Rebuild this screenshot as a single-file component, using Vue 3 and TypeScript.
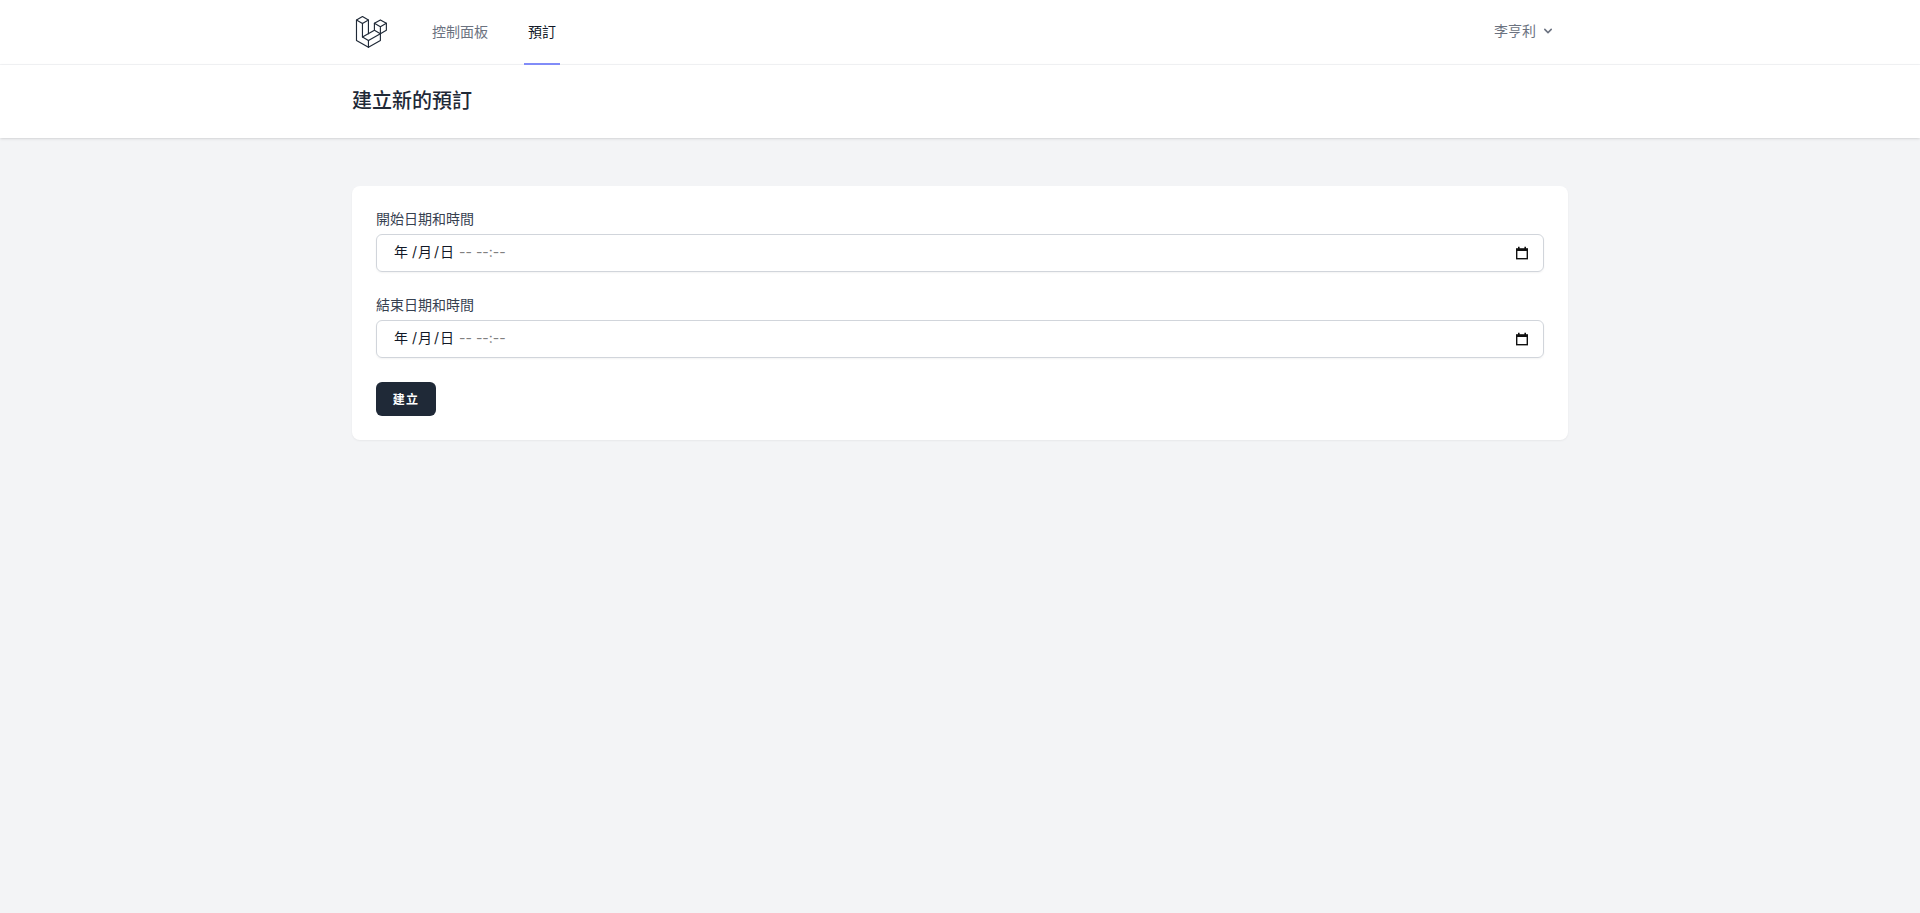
<script setup lang="ts">
const navLinks = [
  { label: '控制面板', active: false },
  { label: '預訂', active: true },
]

const dateFields = ['開始日期和時間', '結束日期和時間']
</script>

<template>
  <div class="page">
    <nav class="nav">
      <div class="container nav-inner">
        <div class="nav-left">
          <svg class="logo" viewBox="0 0 316 316" fill="none" stroke="#1f2937" stroke-width="10" stroke-linejoin="round" stroke-linecap="round">
            <path d="M39.4 52.6 91.8 22.4l52.4 30.2-52.4 30.2z" />
            <path d="M39.4 52.6v179.6l104.9 60.4 104.9-60.4v-59.8" />
            <path d="M144.2 52.6v119.8M91.8 82.8v119.7l52.5 29.7 104.9-59.8" />
            <path d="M144.3 232.2v60.4" />
            <path d="M91.8 202.5 196.7 142.2l52.5 30.2 52.5-30.2V82.2L249.2 52l-52.5 30.2v60" />
            <path d="M196.7 82.2l52.5 30.2 52.5-30.2M249.2 112.4v60" />
          </svg>
          <div class="nav-links">
            <a v-for="link in navLinks" :key="link.label" class="nav-link" :class="{ active: link.active }">{{ link.label }}</a>
          </div>
        </div>
        <button class="user-btn">
          <span>李亨利</span>
          <svg class="chevron" viewBox="0 0 20 20" fill="currentColor">
            <path fill-rule="evenodd" clip-rule="evenodd" d="M5.293 7.293a1 1 0 011.414 0L10 10.586l3.293-3.293a1 1 0 111.414 1.414l-4 4a1 1 0 01-1.414 0l-4-4a1 1 0 010-1.414z" />
          </svg>
        </button>
      </div>
    </nav>

    <header class="header">
      <div class="container">
        <h2 class="title">建立新的預訂</h2>
      </div>
    </header>

    <main class="main">
      <div class="container">
        <form class="card" @submit.prevent>
          <div v-for="field in dateFields" :key="field" class="field">
            <label class="label">{{ field }}</label>
            <div class="date-input">
              <span class="date-part">年</span>
              <span class="date-sep first">/</span>
              <span class="date-part">月</span>
              <span class="date-sep">/</span>
              <span class="date-part">日</span>
              <span class="date-time">-- --:--</span>
              <svg class="calendar" viewBox="0 0 14 14" fill="none">
                <path fill="#111" d="M1 2.2h12V13.4H1z" />
                <path fill="#fff" d="M2.4 5h9.2v7H2.4z" />
                <path fill="#111" d="M3 .8h1.6v2.4H3zM9.4.8H11v2.4H9.4z" />
              </svg>
            </div>
          </div>
          <button class="submit" type="submit"><span class="submit-text">建立</span></button>
        </form>
      </div>
    </main>
  </div>
</template>

<style>
body {
  background: #f3f4f6;
}
</style>

<style scoped>
.page {
  min-height: 913px;
  background: #f3f4f6;
  font-family: Inter, "Noto Sans CJK TC", sans-serif;
}

.container {
  max-width: 1216px;
  margin: 0 auto;
}

.nav {
  background: #fff;
  border-bottom: 1px solid #f3f4f6;
}

.nav-inner {
  height: 64px;
  display: flex;
  justify-content: space-between;
  align-items: center;
}

.nav-left {
  display: flex;
  height: 100%;
  align-items: center;
}

.logo {
  width: 36px;
  height: 36px;
  display: block;
}

.nav-links {
  display: flex;
  height: 100%;
  gap: 32px;
  margin-left: 40px;
}

.nav-link {
  display: flex;
  align-items: center;
  padding: 0 4px;
  border-bottom: 2px solid transparent;
  margin-bottom: -1px;
  font-size: 14px;
  line-height: 20px;
  color: #6b7280;
}

.nav-link.active {
  color: #111827;
  border-bottom-color: #818cf8;
}

.user-btn {
  display: flex;
  align-items: center;
  gap: 4px;
  padding: 7px 12px 9px;
  border: none;
  background: #fff;
  font-family: inherit;
  font-size: 14px;
  line-height: 20px;
  color: #6b7280;
}

.chevron {
  width: 16px;
  height: 16px;
}

.header {
  background: #fff;
  box-shadow: 0 1px 3px 0 rgba(0, 0, 0, 0.1), 0 1px 2px -1px rgba(0, 0, 0, 0.1);
}

.title {
  margin: 0;
  padding: 24px 0;
  font-size: 20px;
  line-height: 25px;
  font-weight: 500;
  color: #1f2937;
}

.main {
  padding-top: 48px;
}

.card {
  background: #fff;
  border-radius: 8px;
  padding: 24px;
  box-shadow: 0 1px 2px 0 rgba(0, 0, 0, 0.05);
}

.field {
  margin-bottom: 24px;
}

.label {
  display: block;
  padding-bottom: 2px;
  font-size: 14px;
  line-height: 18px;
  color: #374151;
}

.date-input {
  display: flex;
  align-items: center;
  height: 38px;
  box-sizing: border-box;
  margin-top: 4px;
  padding: 0 14px 2px 17px;
  border: 1px solid #d1d5db;
  border-radius: 6px;
  box-shadow: 0 1px 2px 0 rgba(0, 0, 0, 0.05);
  font-size: 14px;
  line-height: 20px;
  color: #111827;
}

.date-sep {
  margin: 0 1px 0 2px;
}

.date-sep.first {
  margin-left: 4px;
}

.date-time {
  margin-left: 5px;
  color: #808080;
}

.calendar {
  width: 14px;
  height: 14px;
  margin-left: auto;
  margin-top: 2px;
}

.submit {
  display: block;
  width: 60px;
  height: 34px;
  padding: 0;
  border: none;
  border-radius: 6px;
  background: #1f2937;
  color: #fff;
  font-family: inherit;
  font-size: 12px;
  font-weight: 600;
  letter-spacing: 0.1em;
}

.submit-text {
  display: block;
  margin-top: -1px;
}
</style>
